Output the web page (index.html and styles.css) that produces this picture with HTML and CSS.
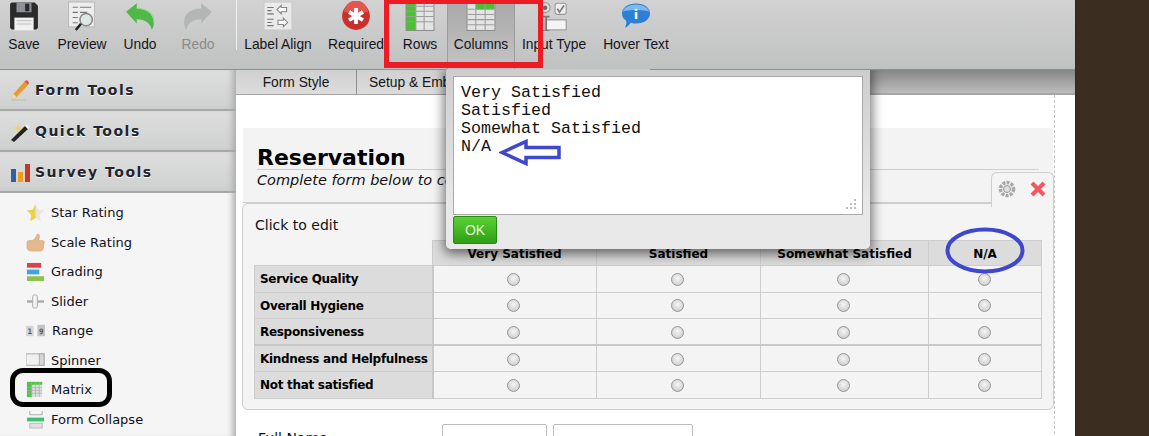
FILE: index.html
```html
<!DOCTYPE html>
<html lang="en">
<head>
<meta charset="utf-8">
<title>Form Builder</title>
<link rel="stylesheet" href="styles.css">
</head>
<body>
<div class="app">
  <header class="toolbar">
    <div class="tool w48"><svg class="ticon" viewBox="0 0 28 27"><path d="M1 3q0-2 2-2h21l3 3v20q0 2-2 2H3q-2 0-2-2z" fill="#2b2b2b"/><rect x="7" y="1" width="14" height="9" fill="#8d9094"/><rect x="15" y="2" width="4" height="7" fill="#2b2b2b"/><rect x="5" y="15" width="18" height="12" fill="#f1f1f1"/><path d="M7 18h14M7 21h14" stroke="#bbb"/></svg><span>Save</span></div>
    <div class="tool w68"><svg class="ticon" viewBox="0 0 28 29"><rect x="1" y="1" width="25" height="24" fill="#eee" stroke="#bbb"/><path d="M5 6h5M12 6h11M5 11h5M12 11h7M5 16h5M5 21h5" stroke="#777"/><circle cx="18" cy="18" r="6" fill="#dfe6e6" stroke="#888" stroke-width="1.5"/><path d="M13 22l-5 6" stroke="#222" stroke-width="2.5"/></svg><span>Preview</span></div>
    <div class="tool w48"><svg class="ticon" viewBox="0 0 28 26"><path d="M1 9L11 1v5c10 0 16 5 16 13 0 3-1 5-2 7-1-6-6-10-14-10v4z" fill="#4fb848"/><path d="M11 6c10 0 16 5 16 13" stroke="#8fdc88" fill="none"/></svg><span>Undo</span></div>
    <div class="tool w68 off"><svg class="ticon" viewBox="0 0 28 26"><path d="M27 9L17 1v5C7 6 1 11 1 19c0 3 1 5 2 7 1-6 6-10 14-10v4z" fill="#b4b6b6"/></svg><span>Redo</span></div>
    <div class="tsep"></div>
    <div class="tool w82"><svg class="ticon" viewBox="0 0 28 28"><rect x="1" y="1" width="26" height="26" fill="#eaeaea" stroke="#ccc"/><path d="M4 6h6M4 9h4M4 12h6M4 17h6M4 20h4M4 23h6" stroke="#777"/><path d="M22 6h-5v-2l-4 4 4 4v-2h5zM14 18h5v-2l4 4-4 4v-2h-5z" fill="#fff" stroke="#888"/></svg><span>Label Align</span></div>
    <div class="tool w74"><svg class="ticon" viewBox="0 0 28 27"><circle cx="14" cy="13.500" r="13" fill="#c9302c"/><path d="M3 10a11 11 0 0 1 22 0z" fill="#e4564d"/><path d="M14 6v15M7.500 9.800l13 7.500M20.500 9.800l-13 7.500" stroke="#fff" stroke-width="3.600"/></svg><span>Required</span></div>
    <div class="tool w54"><svg class="ticon" viewBox="0 0 28 29"><rect x="0" y="0" width="28" height="29" fill="#8e8e8e"/><rect x="1" y="0" width="9" height="28" fill="#49c22f"/><rect x="10" y="0" width="17" height="28" fill="#e4e4e4"/><path d="M1 5h26M1 10h26M1 15h26M1 20h26M10 0v28M18 0v28" stroke="#9c9c9c"/></svg><span>Rows</span></div>
    <div class="tool w68 active"><svg class="ticon" viewBox="0 0 28 29"><rect x="0" y="0" width="28" height="29" fill="#8e8e8e"/><rect x="1" y="0" width="26" height="28" fill="#e4e4e4"/><rect x="9" y="0" width="18" height="8" fill="#49c22f"/><path d="M1 8h26M1 13h26M1 18h26M1 23h26M9 0v28M18 0v28" stroke="#9c9c9c"/></svg><span>Columns</span></div>
    <div class="tool w78"><svg class="ticon" viewBox="0 0 26 27"><circle cx="5" cy="6" r="4.500" fill="#ddd" stroke="#999"/><circle cx="5" cy="6" r="2" fill="#666"/><rect x="14" y="2" width="10" height="10" rx="2" fill="#eee" stroke="#999"/><path d="M16 7l2 3 4-6" stroke="#777" stroke-width="1.500" fill="none"/><rect x="5" y="17" width="19" height="9" fill="#f4f4f4" stroke="#999"/><path d="M3 14h6M6 14v13M3 27h6" stroke="#777" stroke-width="1.500"/></svg><span>Input Type</span></div>
    <div class="tool w86"><svg class="ticon" viewBox="0 0 30 27"><path d="M15 1c8 0 14 4 14 10s-6 10-14 10c-2 0-3 0-5-1-2 3-5 5-6 5 1-2 2-5 1-7-3-2-4-4-4-7C1 5 7 1 15 1z" fill="#2c7fd4"/><path d="M15 2c7 0 12 3 13 7-6-2-20-2-26 0 1-4 6-7 13-7z" fill="#7db8ee"/><text x="15" y="16" class="bubble-i">i</text></svg><span>Hover Text</span></div>
    <div class="notch"></div>
  </header>

  <div class="main">
    <aside class="sidebar">
      <div class="head"><svg class="hicon" viewBox="0 0 20 22"><path d="M2 20l1.500-5L15 2q2-1 3 1t0 3L6.500 18z" fill="#e99a2f"/><path d="M14.500 2.500l3.500 3 1-2-2-2.500z" fill="#d9534f"/><path d="M2 20l1.500-5 3 3z" fill="#f5dcb4"/><path d="M1 21h15" stroke="#bbb"/></svg><span>Form Tools</span></div>
      <div class="head"><svg class="hicon" viewBox="0 0 20 22"><path d="M1 20L15 6l3 3L4 22z" fill="#222"/><path d="M15 6l3 3 2-2-3-3z" fill="#eee"/><path d="M8 3l1 4 4 1-4 1-1 4-1-4-4-1 4-1z" fill="#f2d357"/></svg><span>Quick Tools</span></div>
      <div class="head"><svg class="hicon" viewBox="0 0 20 22"><rect x="1" y="8" width="5" height="13" fill="#2f5fa8"/><rect x="8" y="11" width="5" height="10" fill="#ef9a22"/><rect x="15" y="3" width="5" height="18" fill="#c0392b"/></svg><span>Survey Tools</span></div>
      <ul class="items">
        <li><svg class="iicon" viewBox="0 0 20 20"><path d="M10 1l3 6 6 1-4.500 4.500 1 6.500-5.500-3-5.500 3 1-6.500L1 8l6-1z" fill="#e6e6e6"/><path d="M10 1v15l-5.500 3 1-6.500L1 8l6-1z" fill="#efd23f"/></svg><span>Star Rating</span></li>
        <li><svg class="iicon" viewBox="0 0 20 20"><path d="M1 10q0-2 2-2h4l3-3 2-4q3 0 2 4l-1 3h5q2 1 1 3l-1 6q-1 2-3 2H6q-5 0-5-4z" fill="#e5b98e" stroke="#c79a6e" stroke-width=".5"/></svg><span>Scale Rating</span></li>
        <li><svg class="iicon" viewBox="0 0 20 20"><rect x="1" y="1" width="15" height="5" fill="#d9434e"/><rect x="1" y="8" width="13" height="5" fill="#44a3dc"/><rect x="1" y="15" width="18" height="5" fill="#8bc34a"/></svg><span>Grading</span></li>
        <li><svg class="iicon" viewBox="0 0 20 20"><path d="M1 10h18" stroke="#aaa" stroke-width="2.500"/><rect x="7" y="3" width="5" height="14" rx="2" fill="#f1f1f1" stroke="#aaa"/></svg><span>Slider</span></li>
        <li class="rng"><svg class="iicon" viewBox="0 0 20 20"><rect x="0" y="5" width="8" height="11" fill="#d5d5d5"/><rect x="12" y="4" width="8" height="12" fill="#c4c4c4"/><text x="4" y="14" class="rng-n">1</text><text x="16" y="14" class="rng-n">9</text></svg><span>Range</span></li>
        <li><svg class="iicon" viewBox="0 0 20 20"><rect x="0" y="3" width="19" height="12" fill="#f0f0f0" stroke="#aaa"/><rect x="14" y="3" width="5" height="12" fill="#d6d6d6" stroke="#aaa"/></svg><span>Spinner</span></li>
        <li><svg class="iicon" viewBox="0 0 20 20"><rect x="1" y="2" width="16" height="16" fill="#ddd"/><rect x="1" y="2" width="5" height="16" fill="#52c44a"/><rect x="1" y="2" width="16" height="3" fill="#52c44a"/><path d="M1 8h16M1 11h16M1 14h16M6 2v16M10 2v16M14 2v16" stroke="#aaa" stroke-width=".7"/></svg><span>Matrix</span></li>
        <li><svg class="iicon" viewBox="0 0 20 20"><path d="M4 1v4h13V1" fill="none" stroke="#aaa"/><rect x="1" y="8" width="18" height="4" fill="#3fc06a"/><rect x="4" y="14" width="13" height="5" fill="#e0e0e0" stroke="#bbb"/></svg><span>Form Collapse</span></li>
      </ul>
    </aside>

    <section class="content">
      <nav class="tabs">
        <div class="tab w121">Form Style</div>
        <div class="tab w140">Setup &amp; Embed</div>
      </nav>
      <div class="canvas">
        <div class="sheet">
          <div class="formhead">
            <h1>Reservation</h1>
            <p>Complete form below to complete your reservation</p>
          </div>
          <div class="card">
            <div class="cardtab">
              <svg class="gear" viewBox="0 0 18 18"><circle cx="9" cy="9" r="6.500" fill="none" stroke="#a8a8a8" stroke-width="3.500" stroke-dasharray="3 1.200"/><circle cx="9" cy="9" r="3.500" fill="#ddd" stroke="#999"/></svg>
              <svg class="cross" viewBox="0 0 16 16"><path d="M2 2l12 12M14 2L2 14" stroke="#f4575f" stroke-width="4"/></svg>
            </div>
            <div class="cardlabel">Click to edit</div>
            <table class="matrix">
              <colgroup><col class="c0"><col class="c1"><col class="c2"><col class="c3"><col class="c4"></colgroup>
              <thead><tr><th class="blank"></th><th>Very Satisfied</th><th>Satisfied</th><th>Somewhat Satisfied</th><th>N/A</th></tr></thead>
              <tbody>
                <tr><th>Service Quality</th><td><i class="radio"></i></td><td><i class="radio"></i></td><td><i class="radio"></i></td><td><i class="radio"></i></td></tr>
                <tr><th>Overall Hygiene</th><td><i class="radio"></i></td><td><i class="radio"></i></td><td><i class="radio"></i></td><td><i class="radio"></i></td></tr>
                <tr><th>Responsiveness</th><td><i class="radio"></i></td><td><i class="radio"></i></td><td><i class="radio"></i></td><td><i class="radio"></i></td></tr>
                <tr class="thick"><th>Kindness and Helpfulness</th><td><i class="radio"></i></td><td><i class="radio"></i></td><td><i class="radio"></i></td><td><i class="radio"></i></td></tr>
                <tr><th>Not that satisfied</th><td><i class="radio"></i></td><td><i class="radio"></i></td><td><i class="radio"></i></td><td><i class="radio"></i></td></tr>
              </tbody>
            </table>
          </div>
          <div class="namerow">
            <label>Full Name</label>
            <div class="fld w105"></div>
            <div class="fld w140b"></div>
          </div>
        </div>
      </div>
    </section>
  </div>

  <div class="popup">
    <div class="textarea">Very Satisfied
Satisfied
Somewhat Satisfied
N/A<svg class="grip" viewBox="0 0 12 12"><path d="M9 1h2v2H9zM5 5h2v2H5zM9 5h2v2H9zM1 9h2v2H1zM5 9h2v2H5zM9 9h2v2H9z" fill="#bbb"/></svg></div>
    <div class="okbtn">OK</div>
  </div>

  <div class="mark-red"></div>
  <div class="mark-black"></div>
  <svg class="mark-ellipse" viewBox="0 0 80 47"><ellipse cx="40" cy="23.500" rx="37.500" ry="21" fill="none" stroke="#3f48cc" stroke-width="4"/></svg>
  <svg class="mark-arrow" viewBox="0 0 62 27"><path d="M3 13.500L27 2.500v6h33v10H27v6z" fill="none" stroke="#3f48cc" stroke-width="3.500"/></svg>
</div>
<div class="wood"></div>
</body>
</html>
```

FILE: styles.css
```css
* { box-sizing: border-box; }
html, body { margin: 0; height: 100%; overflow: hidden; }
body { display: flex; font-family: "DejaVu Sans", Verdana, sans-serif; color: #111; background: #3c2e20; }
.app { position: relative; width: 1076px; height: 436px; flex: none; overflow: hidden; background: #fff; border-right: 1px solid #2a2a2a; }
.wood { flex: 1; background: #3b2d20; }

.toolbar { position: relative; z-index: 2; display: flex; height: 70px; background: linear-gradient(#d2d2d2, #c0c1c1); border-bottom: 1px solid #8f8f8f; }
.notch { position: absolute; left: 447px; bottom: -1px; width: 203px; height: 1px; background: #c8c8c8; }
.tool { display: flex; flex-direction: column; align-items: center; height: 63px; font: 13.800px/16px "Liberation Sans", Arial, sans-serif; color: #151520; }
.tool span { margin-top: 6px; white-space: nowrap; }
.ticon { display: block; height: 30px; margin-top: 1px; width: 30px; }
.off { color: #8b8b8b; }
.active { background: linear-gradient(#a8a8a8, #c4c4c4); border-left: 1px solid #9c9c9c; border-right: 1px solid #9c9c9c; height: 69px; }
.w48 { width: 48px; } .w54 { width: 54px; } .w68 { width: 68px; } .w74 { width: 74px; }
.w78 { width: 78px; } .w82 { width: 82px; } .w86 { width: 86px; }
.tsep { width: 1px; height: 50px; margin: 0 0 0 4px; background: #f0f0f0; }
.bubble-i { font: bold 13px "DejaVu Sans", sans-serif; fill: #fff; text-anchor: middle; }
.rng-n { font: bold 8px "DejaVu Sans Mono", monospace; fill: #555; text-anchor: middle; }

.main { display: flex; height: 366px; }
.sidebar { width: 236px; flex: none; background: #f5f5f5; box-shadow: inset -7px 0 6px -4px #a9a9a9; }
.head { display: flex; align-items: center; gap: 5px; height: 41px; padding-left: 10px; font-size: 14px; font-weight: bold; letter-spacing: 1.500px; color: #20242e; text-shadow: 0 1px 0 #fff; background: linear-gradient(#dedede, #cfd0d0); border-bottom: 2px solid #a8a8a8; box-shadow: inset -7px 0 6px -4px #a9a9a9; }
.hicon { width: 20px; height: 22px; flex: none; }
.items { list-style: none; margin: 0; padding: 5px 0 0 26px; }
.items li { display: flex; align-items: center; gap: 6px; height: 29.500px; font-size: 13px; color: #10101c; }
.items .rng { gap: 7px; }
.iicon { width: 19px; height: 19px; flex: none; }

.content { flex: 1; min-width: 0; display: flex; flex-direction: column; }
.tabs { display: flex; height: 25px; flex: none; background: linear-gradient(#868686, #bcbcbc); border-bottom: 2px solid #a5a5a5; }
.tab { height: 24px; font: 13.800px/25px "Liberation Sans", Arial, sans-serif; color: #141414; text-align: center; background: linear-gradient(#d0d0d0, #dcdcdc); border-right: 1px solid #8f8f8f; }
.w121 { width: 121px; } .w140 { width: 140px; padding-right: 0; text-align: left; padding-left: 12px; }
.canvas { flex: 1; padding: 0 0 0 7px; }
.sheet { width: 812px; height: 100%; padding-top: 33px; border-right: 1px dashed #c4c4c4; }

.formhead { height: 75px; margin-right: 1px; padding: 17px 14px 0; background: #f3f3f3; border-bottom: 1px solid #cfcfcf; }
.formhead h1 { margin: 0; height: 24px; font-size: 22px; line-height: 26px; font-weight: bold; color: #000; }
.formhead p { margin: 0; padding-top: 1px; border-top: 1px solid #cfcfcf; font-size: 14.500px; line-height: 18px; font-style: italic; color: #111; white-space: nowrap; overflow: hidden; }
.card { position: relative; height: 207px; margin: 0 0 0 -1px; padding: 10px 12px 0 11px; background: #f4f4f4; border: 1px solid #cdcdcd; border-radius: 6px; }
.cardtab { position: absolute; right: -1px; top: -32px; display: flex; align-items: center; gap: 14px; width: 63px; height: 35px; padding: 0 7px 2px 6px; background: #f4f4f4; border: 1px solid #cfcfcf; border-bottom: 0; border-radius: 6px 6px 0 0; }
.gear { width: 18px; height: 18px; flex: none; }
.cross { width: 16px; height: 16px; flex: none; }
.cardlabel { height: 26px; padding: 2px 0 0 1px; font-size: 14px; line-height: 18px; }

.matrix { width: 787px; border-collapse: collapse; table-layout: fixed; font-size: 12px; }
.c0 { width: 178px; } .c1 { width: 164px; } .c2 { width: 164px; } .c3 { width: 168px; } .c4 { width: 113px; }
.matrix th, .matrix td { padding: 0; border: 1px solid #cdcdcd; height: 26.500px; }
.matrix thead th { height: 25px; text-align: center; background: #dcdcdc; color: #000; vertical-align: bottom; padding-bottom: 4px; }
.matrix thead th.blank { background: transparent; border: 0; border-right: 1px solid #cdcdcd; }
.matrix tbody th { text-align: left; padding: 1px 0 0 5px; background: #dcdcdc; color: #000; white-space: nowrap; letter-spacing: -0.300px; border-right: 2px solid #c8c8c8; }
.matrix td { padding: 1px 2px 0 0; text-align: center; vertical-align: middle; }
.thick th, .thick td { border-top: 2px solid #c8c8c8; }
.radio { display: block; width: 13px; height: 13px; margin: 0 auto; border-radius: 50%; border: 1px solid #979797; background: radial-gradient(circle at 50% 40%, #f6f6f6, #d0d0d0 75%); }

.namerow { display: flex; align-items: flex-start; margin-top: 14px; padding-left: 15px; font-size: 14px; }
.namerow label { width: 184px; padding-top: 5px; line-height: 18px; }
.fld { height: 30px; background: #fff; border: 1px solid #bdbdbd; border-radius: 2px 2px 0 0; }
.w105 { width: 105px; margin-right: 6px; } .w140b { width: 140px; }

.popup { position: absolute; z-index: 1; left: 446px; top: 68px; width: 424px; height: 181px; padding: 8px 7px 0 7px; background: linear-gradient(#cdcdcd, #e9e9e9 80%); border-radius: 0 0 5px 5px; box-shadow: 0 3px 12px 2px rgba(0,0,0,.55); }
.textarea { position: relative; height: 139px; padding: 7px 7px; background: #fff; border: 1px solid #a9a9a9; font: 16.667px/18px "Liberation Mono", "Courier New", monospace; color: #111; white-space: pre; }
.grip { position: absolute; right: 5px; bottom: 4px; width: 12px; height: 12px; }
.okbtn { width: 44px; height: 28px; margin-top: 1px; font: 14px/27px "Liberation Sans", Arial, sans-serif; text-align: center; color: #e4f7d2; background: linear-gradient(#5ad136, #2f9e14); border: 1px solid #2b8a12; border-radius: 2px; }

.mark-red { position: absolute; z-index: 3; left: 384px; top: -3px; width: 159px; height: 71px; border: 7px solid #ed1c24; border-left-width: 5px; border-right-width: 5px; border-bottom-width: 6px; }
.mark-black { position: absolute; z-index: 3; left: 10px; top: 368px; width: 102px; height: 39px; border: 5px solid #000; border-radius: 13px; }
.mark-ellipse { position: absolute; z-index: 3; left: 944.500px; top: 226.500px; width: 80px; height: 47px; }
.mark-arrow { position: absolute; z-index: 3; left: 498.500px; top: 138.500px; width: 62px; height: 27px; }
```
